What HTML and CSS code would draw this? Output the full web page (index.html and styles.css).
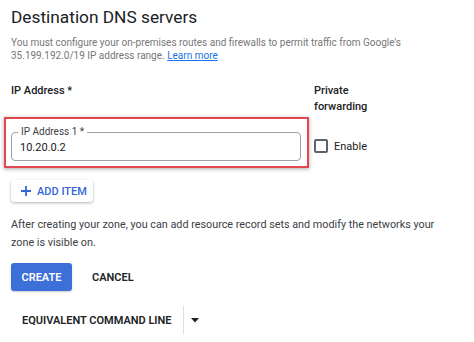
FILE: index.html
```html
<!DOCTYPE html>
<html>
<head>
<meta charset="utf-8">
<link rel="stylesheet" href="styles.css">
</head>
<body>
<div class="page">
  <h1 class="title">Destination DNS servers</h1>
  <p class="desc">You must configure your on-premises routes and firewalls to permit traffic from Google's 35.199.192.0/19 IP address range. <a class="link" href="#">Learn more</a></p>

  <div class="grid">
    <div class="col-head">IP Address *</div>
    <div class="col-head right">Private forwarding</div>
    <div class="highlight">
      <div class="field">
        <span class="field-label">IP Address 1 *</span>
        <span class="field-value">10.20.0.2</span>
      </div>
    </div>
    <label class="check">
      <span class="box"></span>
      <span class="check-text">Enable</span>
    </label>
  </div>

  <button class="add-btn">
    <svg class="plus" width="10" height="10" viewBox="0 0 10 10"><path d="M5 0v10M0 5h10" stroke="#3367d6" stroke-width="1.8"/></svg>
    <span>ADD ITEM</span>
  </button>

  <p class="after">After creating your zone, you can add resource record sets and modify the networks your zone is visible on.</p>

  <div class="actions">
    <button class="btn primary">CREATE</button>
    <button class="btn flat">CANCEL</button>
  </div>

  <div class="cmd">
    <button class="btn flat cmd-main">EQUIVALENT COMMAND LINE</button>
    <span class="sep"></span>
    <button class="cmd-caret"><svg width="8" height="5" viewBox="0 0 8 5"><path d="M0 0h8L4 4.5z" fill="#202124"/></svg></button>
  </div>
</div>
</body>
</html>
```

FILE: styles.css
```css
* { box-sizing: border-box; }
html, body { margin: 0; padding: 0; background: #fff; }
body { font-family: Roboto, "Noto Sans", Arial, sans-serif; color: #202124; width: 474px; height: 342px; overflow: hidden; }
.page { padding: 6px 0 0 11px; }
.title { margin: 0; font-size: 17.3px; line-height: 22px; font-weight: 400; color: #202124; }
.desc { margin: 8px 0 0; font-size: 10px; line-height: 13px; color: #777; width: 432px; }
.link { color: #1a73e8; text-decoration: underline; text-underline-offset: 1px; }
.grid { display: grid; grid-template-columns: 298px auto; column-gap: 5px; margin-top: 21px; }
.col-head { font-size: 11px; line-height: 16px; font-weight: 500; color: #202124; height: 32px; }
.col-head.right { width: 80px; }
.highlight { margin: 2px 0 0 -7px; border: 2px solid #e2474f; padding: 13px 6px 5px 5px; box-shadow: 0 1px 4px rgba(0,0,0,0.35); }
.field { position: relative; height: 29px; border: 1px solid #9aa0a6; border-radius: 4px; padding: 0 0 0 8px; display: flex; align-items: center; }
.field-label { position: absolute; left: 6px; top: -7px; background: #fff; padding: 0 3px; font-size: 10px; line-height: 12px; color: #3c4043; }
.field-value { font-size: 11px; color: #202124; padding-top: 2px; }
.check { display: flex; align-items: center; margin-top: 24px; height: 14px; }
.box { width: 14px; height: 14px; border: 2px solid #5f6368; border-radius: 2px; }
.check-text { margin-left: 6px; font-size: 11px; color: #202124; }
.add-btn { margin-top: 12px; display: flex; align-items: center; height: 22px; width: 82px; padding: 0 0 0 10px; border: none; background: #fff; border-radius: 3px; box-shadow: 0 1px 3px rgba(0,0,0,0.3); font-family: inherit; font-size: 11px; font-weight: 500; color: #3367d6; }
.plus { margin-right: 6px; }
.after { margin: 14px 0 0; font-size: 10.8px; line-height: 17.5px; color: #3c4043; width: 445px; }
.actions { display: flex; margin-top: 12px; gap: 10px; }
.btn { font-family: inherit; font-size: 11px; font-weight: 600; border: none; height: 28px; border-radius: 3px; padding: 0 10px; background: transparent; color: #202124; }
.btn.primary { background: #3c6fd8; color: #fff; width: 61px; padding: 0; box-shadow: 0 1px 2px rgba(0,0,0,0.2); }
.cmd { display: flex; align-items: center; margin-top: 15px; height: 28px; }
.cmd-main { padding: 0 11px; }
.sep { width: 1px; height: 28px; background: #e0e0e0; margin-left: 0; }
.cmd-caret { border: none; background: transparent; padding: 0 0 0 7px; height: 28px; display: flex; align-items: center; }
```
